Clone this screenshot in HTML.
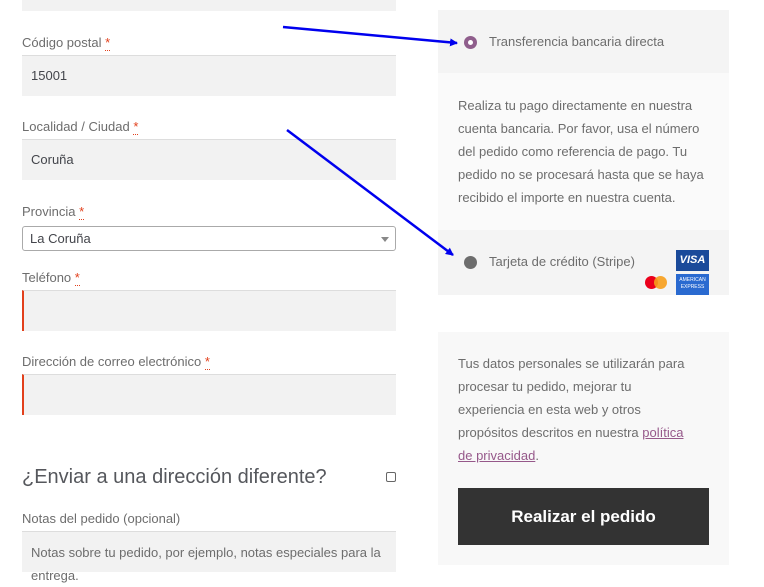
<!DOCTYPE html>
<html><head><meta charset="utf-8"><style>
*{margin:0;padding:0;box-sizing:border-box}
body{width:764px;height:572px;overflow:hidden;background:#fff;position:relative;font-family:"Liberation Sans",sans-serif;color:#6d6d6d;font-size:13px}
.a{position:absolute}
.lbl{position:absolute;left:22px;font-size:13px;color:#6d6d6d}
.lbl u{color:#e2401c;text-decoration:none;border-bottom:1px dotted #e2401c}
.in{position:absolute;left:22px;width:374px;height:41px;background:#f2f2f2;border-top:1px solid #ddd;font-size:13px;color:#43454b;padding:12px 9px}
.err{border-left:2px solid #e2401c}
p.t{line-height:23px;font-size:13px;color:#6d6d6d}
</style></head><body>
<div class="in" style="top:-30px"></div>
<div class="lbl" style="top:35px">Código postal <u>*</u></div>
<div class="in" style="top:55px">15001</div>
<div class="lbl" style="top:119px">Localidad / Ciudad <u>*</u></div>
<div class="in" style="top:139px">Coruña</div>
<div class="lbl" style="top:204px">Provincia <u>*</u></div>
<div class="a" style="left:22px;top:226px;width:374px;height:25px;border:1px solid #aaa;border-radius:3px;background:#fff;color:#43454b;padding:4px 7px;font-size:13px">La Coruña<span class="a" style="right:6px;top:10px;border:4px solid transparent;border-top:5px solid #888;width:0;height:0"></span></div>
<div class="lbl" style="top:270px">Teléfono <u>*</u></div>
<div class="in err" style="top:290px"></div>
<div class="lbl" style="top:354px">Dirección de correo electrónico <u>*</u></div>
<div class="in err" style="top:374px"></div>
<div class="a" style="left:22px;top:466px;font-size:20px;color:#55575c">¿Enviar a una dirección diferente?</div>
<div class="a" style="left:386px;top:472px;width:10px;height:10px;border:1px solid #666;border-radius:2px"></div>
<div class="lbl" style="top:511px">Notas del pedido (opcional)</div>
<div class="in" style="top:531px;color:#6d6d6d;line-height:23px;padding-top:9px">Notas sobre tu pedido, por ejemplo, notas especiales para la entrega.</div>

<div class="a" style="left:438px;top:10px;width:291px;height:63px;background:#f4f4f4"></div>
<div class="a" style="left:464px;top:36px;width:13px;height:13px;border-radius:50%;background:#8f5e8c"><div class="a" style="left:4px;top:4px;width:5px;height:5px;border-radius:50%;background:#fff"></div></div>
<div class="a" style="left:489px;top:34px">Transferencia bancaria directa</div>
<div class="a" style="left:438px;top:73px;width:291px;height:157px;background:#fafafa;padding:21px 20px">
<p class="t">Realiza tu pago directamente en nuestra cuenta bancaria. Por favor, usa el número del pedido como referencia de pago. Tu pedido no se procesará hasta que se haya recibido el importe en nuestra cuenta.</p></div>
<div class="a" style="left:438px;top:230px;width:291px;height:65px;background:#f4f4f4"></div>
<div class="a" style="left:464px;top:256px;width:13px;height:13px;border-radius:50%;background:#6d6d6d"></div>
<div class="a" style="left:489px;top:254px">Tarjeta de crédito (Stripe)</div>
<div class="a" style="left:676px;top:250px;width:33px;height:21px;background:#1a4a9a;color:#fff;font-weight:bold;font-style:italic;font-size:11px;text-align:center;line-height:21px">VISA</div>
<div class="a" style="left:676px;top:274px;width:33px;height:21px;background:#2a6ad0;color:#fff;font-size:5px;text-align:center;line-height:7px;padding-top:3px">AMERICAN<br>EXPRESS</div>
<div class="a" style="left:645px;top:276px;width:13px;height:13px;border-radius:50%;background:#eb001b"></div>
<div class="a" style="left:654px;top:276px;width:13px;height:13px;border-radius:50%;background:#f79e1b;opacity:.9"></div>

<div class="a" style="left:438px;top:332px;width:291px;height:233px;background:#f8f8f8;padding:20px 10px 20px 20px">
<p class="t" style="white-space:nowrap">Tus datos personales se utilizarán para<br>procesar tu pedido, mejorar tu<br>experiencia en esta web y otros<br>propósitos descritos en nuestra <span style="color:#96588a;text-decoration:underline">política</span><br><span style="color:#96588a;text-decoration:underline">de privacidad</span>.</p></div>
<div class="a" style="left:458px;top:488px;width:251px;height:57px;background:#333;color:#fff;font-weight:bold;font-size:17px;text-align:center;line-height:57px">Realizar el pedido</div>

<svg class="a" style="left:0;top:0" width="764" height="572">
<defs><marker id="m" markerWidth="8" markerHeight="8" refX="7" refY="4" orient="auto" markerUnits="userSpaceOnUse"><path d="M0,0L8,4L0,8z" fill="#0000ee"/></marker></defs>
<line x1="283" y1="27" x2="457" y2="43" stroke="#0000ee" stroke-width="2.5" marker-end="url(#m)"/>
<line x1="287" y1="130" x2="453" y2="255" stroke="#0000ee" stroke-width="2.5" marker-end="url(#m)"/>
</svg>
</body></html>
